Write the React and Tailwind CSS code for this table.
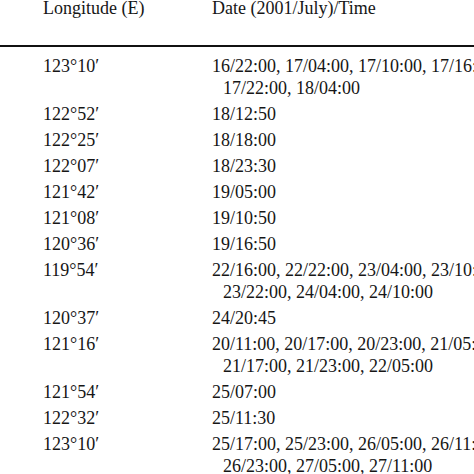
import React from "react";

const rows = [
  { lon: "123°10′", lines: ["16/22:00, 17/04:00, 17/10:00, 17/16:00,", "17/22:00, 18/04:00"] },
  { lon: "122°52′", lines: ["18/12:50"] },
  { lon: "122°25′", lines: ["18/18:00"] },
  { lon: "122°07′", lines: ["18/23:30"] },
  { lon: "121°42′", lines: ["19/05:00"] },
  { lon: "121°08′", lines: ["19/10:50"] },
  { lon: "120°36′", lines: ["19/16:50"] },
  { lon: "119°54′", lines: ["22/16:00, 22/22:00, 23/04:00, 23/10:00,", "23/22:00, 24/04:00, 24/10:00"] },
  { lon: "120°37′", lines: ["24/20:45"] },
  { lon: "121°16′", lines: ["20/11:00, 20/17:00, 20/23:00, 21/05:00,", "21/17:00, 21/23:00, 22/05:00"] },
  { lon: "121°54′", lines: ["25/07:00"] },
  { lon: "122°32′", lines: ["25/11:30"] },
  { lon: "123°10′", lines: ["25/17:00, 25/23:00, 26/05:00, 26/11:00,", "26/23:00, 27/05:00, 27/11:00"] },
];

export default function App() {
  return (
    <div className="w-[474px] h-[474px] overflow-hidden bg-white text-[#161616] text-[18px] font-['Liberation_Serif',serif] whitespace-nowrap">
      <div className="flex leading-[17px]">
        <div className="w-[212px] pl-[43px]">Longitude (E)</div>
        <div>Date (2001/July)/Time</div>
      </div>
      <div className="mt-[28px] border-t-2 border-[#111]" />
      <div className="pt-[4px]">
        {rows.map((r, i) => (
          <div key={i} className="flex pt-[4px] leading-[22px]">
            <div className="w-[212px] shrink-0 pl-[43px]">{r.lon}</div>
            <div>
              {r.lines.map((l, j) => (
                <div key={j} className={j > 0 ? "pl-[11px]" : ""}>
                  {l}
                </div>
              ))}
            </div>
          </div>
        ))}
      </div>
    </div>
  );
}
